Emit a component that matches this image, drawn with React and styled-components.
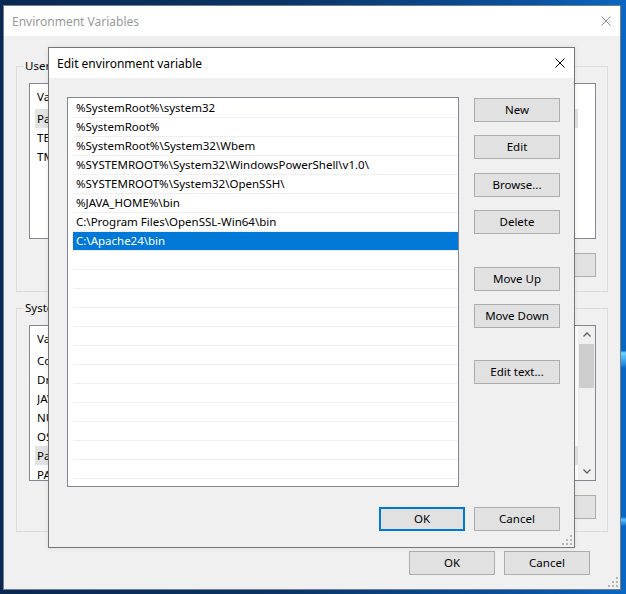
import React from "react";
import styled, { createGlobalStyle } from "styled-components";

// Global page reset
const GlobalStyle = createGlobalStyle`
  html, body {
    margin: 0;
    padding: 0;
  }
  body {
    width: 626px;
    height: 594px;
    overflow: hidden;
    font-family: "Segoe UI", "Noto Sans", "Open Sans", sans-serif;
    font-size: 11.5px;
    color: #000;
  }
  * {
    box-sizing: border-box;
  }
`;

const userVars = [
  ["Path", "C:\\Users\\Admin\\AppData\\Local\\Microsoft\\WindowsApps;"],
  ["TEMP", "C:\\Users\\Admin\\AppData\\Local\\Temp"],
  ["TMP", "C:\\Users\\Admin\\AppData\\Local\\Temp"],
];

const systemVars = [
  ["ComSpec", "C:\\Windows\\system32\\cmd.exe"],
  ["DriverData", "C:\\Windows\\System32\\Drivers\\DriverData"],
  ["JAVA_HOME", "C:\\Program Files\\Java\\jdk-11"],
  ["NUMBER_OF_PROCESSORS", "4"],
  ["OS", "Windows_NT"],
  ["Path", "C:\\Windows\\system32;C:\\Windows;C:\\Windows\\System32\\Wbem;"],
  ["PATHEXT", ".COM;.EXE;.BAT;.CMD;.VBS;.VBE;.JS;.JSE;.WSF;.WSH;.MSC"],
];

const pathEntries = [
  "%SystemRoot%\\system32",
  "%SystemRoot%",
  "%SystemRoot%\\System32\\Wbem",
  "%SYSTEMROOT%\\System32\\WindowsPowerShell\\v1.0\\",
  "%SYSTEMROOT%\\System32\\OpenSSH\\",
  "%JAVA_HOME%\\bin",
  "C:\\Program Files\\OpenSSL-Win64\\bin",
  "C:\\Apache24\\bin",
];

// Desktop + outer window
const Desktop = styled.div`
  position: relative;
  width: 626px;
  height: 594px;
  padding: 5px 0 0 3px;
  background:
    linear-gradient(180deg, transparent 59%, #6fd2ff 59.4%, #2f9be8 61%, transparent 62%, transparent 87%, #59c4ff 87.5%, transparent 88.6%) right top / 6px 100% no-repeat,
    linear-gradient(90deg, #0a2850 0%, #0b3464 45%, #0a52a0 85%, #0a66c2 100%);
`;

const Window = styled.div`
  position: relative;
  width: 618px;
  height: 585px;
  border: 1px solid #6c7f96;
  background: #f0f0f0;
  display: flex;
  flex-direction: column;
`;

const TitleBar = styled.div`
  height: ${(p) => p.$h}px;
  flex-shrink: 0;
  background: #fff;
  display: flex;
  align-items: center;
  justify-content: space-between;
  padding: 0 9px 0 8px;
  color: ${(p) => (p.$active ? "#000" : "#999")};
  font-size: 12px;
`;

const Body = styled.div`
  flex: 1;
  padding: 30px 12px 0 12px;
  display: flex;
  flex-direction: column;
`;

const Group = styled.div`
  position: relative;
  border: 1px solid #dcdcdc;
  margin-top: ${(p) => p.$top || 0}px;
  padding: 16px 11px ${(p) => p.$bottom}px 12px;
`;

const Legend = styled.span`
  position: absolute;
  top: -9px;
  left: 7px;
  padding: 0 1px;
  line-height: 16px;
  background: #f0f0f0;
  white-space: nowrap;
`;

const VarList = styled.div`
  height: 156px;
  border: 1px solid #828790;
  background: #fff;
  display: flex;
  overflow: hidden;
`;

const VarBody = styled.div`
  flex: 1;
  overflow: hidden;
`;

const VarHeader = styled.div`
  height: 25px;
  display: flex;
  align-items: center;
  padding-left: 7px;
`;

const VarRow = styled.div`
  height: 19px;
  width: 543px;
  margin-left: 5px;
  padding-left: 2px;
  display: flex;
  align-items: center;
  white-space: nowrap;
  background: ${(p) => (p.$selected ? "#e3e3e3" : "transparent")};
`;

const Cell = styled.span`
  width: ${(p) => p.$w}px;
  flex-shrink: 0;
  overflow: hidden;
  white-space: nowrap;
`;

const ScrollBar = styled.div`
  width: 17px;
  flex-shrink: 0;
  background: #f0f0f0;
  display: flex;
  flex-direction: column;
`;

const ScrollArrow = styled.div`
  height: 17px;
  display: flex;
  align-items: center;
  justify-content: center;
`;

const ScrollTrack = styled.div`
  flex: 1;
  padding: 1px 1px 0 1px;
`;

const Thumb = styled.div`
  height: 44px;
  background: #cdcdcd;
`;

const ButtonRow = styled.div`
  display: flex;
  justify-content: flex-end;
  gap: ${(p) => p.$gap || 9}px;
  margin-top: ${(p) => p.$top}px;
  padding-right: ${(p) => p.$right || 0}px;
`;

const Button = styled.button`
  width: 86px;
  height: 24px;
  flex-shrink: 0;
  margin: 0;
  margin-top: ${(p) => p.$top || 0}px;
  padding: 0;
  background: #e1e1e1;
  border: ${(p) => (p.$default ? "2px solid #0078d7" : "1px solid #adadad")};
  font-family: inherit;
  font-size: 11.5px;
  color: #000;
  line-height: 20px;
`;

// Edit dialog
const Dialog = styled.div`
  position: absolute;
  left: 48px;
  top: 47px;
  width: 527px;
  height: 501px;
  border: 1px solid #767676;
  background: #f0f0f0;
  display: flex;
  flex-direction: column;
  box-shadow: 0 0 6px rgba(0, 0, 0, 0.08);
`;

const DialogBody = styled.div`
  flex: 1;
  padding: 19px 14px 0 18px;
  display: flex;
  flex-direction: column;
`;

const DialogMain = styled.div`
  display: flex;
  gap: 15px;
`;

const PathList = styled.div`
  width: 392px;
  height: 390px;
  border: 1px solid #828790;
  background: #fff;
  padding: 1px 0 0 5px;
  overflow: hidden;
`;

const PathRow = styled.div`
  height: 19px;
  padding-left: 3px;
  line-height: 18px;
  border-bottom: 1px solid #efefef;
  white-space: nowrap;
  background: ${(p) => (p.$selected ? "#0078d7" : "transparent")};
  color: ${(p) => (p.$selected ? "#fff" : "#000")};
`;

const ButtonColumn = styled.div`
  width: 86px;
  display: flex;
  flex-direction: column;
`;

const Grip = styled.svg`
  position: absolute;
  right: ${(p) => p.$r}px;
  bottom: ${(p) => p.$b}px;
`;

const CloseIcon = ({ color }) => (
  <svg width="10" height="10" viewBox="0 0 10 10">
    <path d="M0.5 0.5 L9.5 9.5 M9.5 0.5 L0.5 9.5" stroke={color} strokeWidth="1" fill="none" />
  </svg>
);

const Chevron = ({ up }) => (
  <svg width="8" height="5" viewBox="0 0 8 5">
    <path
      d={up ? "M0.5 4.5 L4 1 L7.5 4.5" : "M0.5 0.5 L4 4 L7.5 0.5"}
      stroke="#606060"
      strokeWidth="1.3"
      fill="none"
    />
  </svg>
);

const GripIcon = (props) => (
  <Grip width="10" height="10" viewBox="0 0 10 10" {...props}>
    {[
      [8, 0],
      [8, 4],
      [4, 4],
      [8, 8],
      [4, 8],
      [0, 8],
    ].map(([x, y]) => (
      <rect key={`${x}-${y}`} x={x} y={y} width="2" height="2" fill="#b4b4b4" />
    ))}
  </Grip>
);

const VariableList = ({ rows, selected, scroll }) => (
  <VarList>
    <VarBody>
      <VarHeader>
        <Cell $w={180}>Variable</Cell>
        <Cell $w={300}>Value</Cell>
      </VarHeader>
      {rows.map(([name, value]) => (
        <VarRow key={name} $selected={name === selected}>
          <Cell $w={180}>{name}</Cell>
          <Cell $w={355}>{value}</Cell>
        </VarRow>
      ))}
    </VarBody>
    {scroll && (
      <ScrollBar>
        <ScrollArrow>
          <Chevron up />
        </ScrollArrow>
        <ScrollTrack>
          <Thumb />
        </ScrollTrack>
        <ScrollArrow>
          <Chevron />
        </ScrollArrow>
      </ScrollBar>
    )}
  </VarList>
);

export default function App() {
  const emptyRows = Array.from({ length: 13 }, (_, i) => i);
  return (
    <>
      <GlobalStyle />
      <Desktop>
        <Window>
          <TitleBar $h={30}>
            <span>Environment Variables</span>
            <CloseIcon color="#8f8f8f" />
          </TitleBar>
          <Body>
            <Group $bottom={14}>
              <Legend>User variables for Admin</Legend>
              <VariableList rows={userVars} selected="Path" />
              <ButtonRow $top={14}>
                <Button>New...</Button>
                <Button>Edit...</Button>
                <Button>Delete</Button>
              </ButtonRow>
            </Group>
            <Group $top={16} $bottom={12}>
              <Legend>System variables</Legend>
              <VariableList rows={systemVars} selected="Path" scroll />
              <ButtonRow $top={14}>
                <Button>New...</Button>
                <Button>Edit...</Button>
                <Button>Delete</Button>
              </ButtonRow>
            </Group>
            <ButtonRow $top={19} $right={18}>
              <Button>OK</Button>
              <Button>Cancel</Button>
            </ButtonRow>
          </Body>
          <GripIcon $r={2} $b={2} />
        </Window>

        <Dialog>
          <TitleBar $h={30} $active>
            <span>Edit environment variable</span>
            <CloseIcon color="#000" />
          </TitleBar>
          <DialogBody>
            <DialogMain>
              <PathList>
                {pathEntries.map((p) => (
                  <PathRow key={p} $selected={p === "C:\\Apache24\\bin"}>
                    {p}
                  </PathRow>
                ))}
                {emptyRows.map((i) => (
                  <PathRow key={i} />
                ))}
              </PathList>
              <ButtonColumn>
                <Button $top={1}>New</Button>
                <Button $top={13}>Edit</Button>
                <Button $top={14}>Browse...</Button>
                <Button $top={13}>Delete</Button>
                <Button $top={33}>Move Up</Button>
                <Button $top={13}>Move Down</Button>
                <Button $top={32}>Edit text...</Button>
              </ButtonColumn>
            </DialogMain>
            <ButtonRow $top={20}>
              <Button $default>OK</Button>
              <Button>Cancel</Button>
            </ButtonRow>
          </DialogBody>
          <GripIcon $r={2} $b={2} />
        </Dialog>
      </Desktop>
    </>
  );
}
